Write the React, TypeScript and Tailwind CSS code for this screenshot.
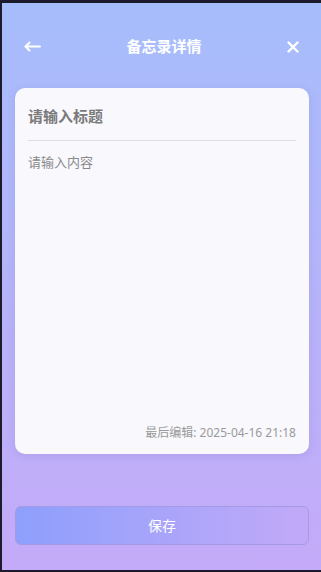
import React from 'react'

const font = { fontFamily: '"Noto Sans", "Noto Sans CJK SC", sans-serif' }

const App = () => {
    return (
        <div className="h-[572px] w-[321px] bg-[#1b1b2b] pt-[3px] pb-[2px] pl-[2px]" style={font}>
            <div className="flex h-full w-full flex-col bg-gradient-to-b from-[#a6bdfb] to-[#c4aaf8]">
                <div className="flex h-[85px] items-center justify-between pl-[22px] pr-[22px] pt-[2px]">
                    <svg width="17" height="11" viewBox="0 0 17 11" fill="none" stroke="white" strokeWidth="2" strokeLinecap="round">
                        <path d="M2 5.5h14" />
                        <path d="M5.5 1.5L1.5 5.5L5.5 9.5" />
                    </svg>
                    <h1 className="text-[15px] font-bold text-white">备忘录详情</h1>
                    <svg width="12" height="12" viewBox="0 0 12 12" fill="none" stroke="white" strokeWidth="2.4" strokeLinecap="round">
                        <path d="M1.5 1.5l9 9M10.5 1.5l-9 9" />
                    </svg>
                </div>
                <div className="ml-[13px] mr-[12px] flex h-[366px] flex-col rounded-[10px] bg-[#f8f8fd] px-[13px] shadow-[0_2px_8px_rgba(90,80,160,0.15)]">
                    <div className="border-b border-[#dedee6] pt-[17px] pb-[12px] text-[15px] font-bold text-[#7b7b7b]">请输入标题</div>
                    <div className="pt-[12px] text-[13px] text-[#8a8a8a]">请输入内容</div>
                    <div className="mt-auto pb-[12px] text-right text-[12px] text-[#9a9a9a]">最后编辑: 2025-04-16 21:18</div>
                </div>
                <div className="flex-1" />
                <button type="button" className="mb-[25px] ml-[13px] mr-[12px] h-[39px] rounded-[6px] border border-[#a49be6] bg-gradient-to-r from-[#8d9ffc] to-[#c2a9f8] text-[14px] text-white">
                    保存
                </button>
            </div>
        </div>
    )
}

export default App
